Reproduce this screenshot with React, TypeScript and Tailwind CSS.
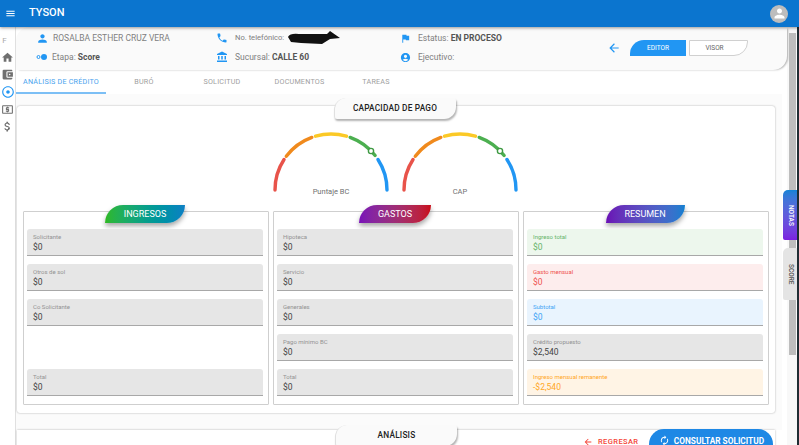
import {
  MdMenu, MdHome, MdAccountBalanceWallet, MdLocalAtm, MdAttachMoney, MdPerson, MdPhone,
  MdAccountBalance, MdFlag, MdAccountCircle, MdArrowBack, MdAutorenew, MdAdjust,
} from 'react-icons/md';

const tabs = [
  { label: 'ANÁLISIS DE CRÉDITO', w: 'w-[90px]', active: true },
  { label: 'BURÓ', w: 'w-[76px]' },
  { label: 'SOLICITUD', w: 'w-[80px]' },
  { label: 'DOCUMENTOS', w: 'w-[75px]' },
  { label: 'TAREAS', w: 'w-[78px]' },
];

const ingresos = [
  { label: 'Solicitante', value: '$0' },
  { label: 'Otros de sol', value: '$0' },
  { label: 'Co Solicitante', value: '$0' },
];

const gastos = ['Hipoteca', 'Servicio', 'Generales', 'Pago mínimo BC', 'Total'];

const resumen = [
  { label: 'Ingreso total', value: '$0', box: 'bg-[#edf7ed]', text: 'text-[#66b56a]' },
  { label: 'Gasto mensual', value: '$0', box: 'bg-[#fdeded]', text: 'text-[#ef5350]' },
  { label: 'Subtotal', value: '$0', box: 'bg-[#e9f4fe]', text: 'text-[#42a5f5]' },
  { label: 'Crédito propuesto', value: '$2,540', box: 'bg-[#e6e6e6]', text: 'text-[#444444]', muted: true },
  { label: 'Ingreso mensual remanente', value: '-$2,540', box: 'bg-[#fff4e5]', text: 'text-[#ffa726]' },
];

const Field = ({ label, value, box = 'bg-[#e6e6e6]', text = 'text-[#444444]', muted = true }: {
  label: string; value: string; box?: string; text?: string; muted?: boolean;
}) => (
  <div className={`h-[27px] rounded-t-[3px] border-b border-[#a8a8a8] pl-[6px] pt-[3px] ${box}`}>
    <div className={`text-[6px] leading-[9px] ${muted ? 'text-[#939393]' : text}`}>{label}</div>
    <div className={`text-[8.5px] leading-[12px] ${text}`}>{value}</div>
  </div>
);

const Badge = ({ title, width, gradient }: { title: string; width: string; gradient: string }) => (
  <div className="flex justify-center h-0">
    <div className={`-mt-[7px] h-[18px] ${width} rounded-tl-[22px] rounded-br-[22px] text-white text-[9px] leading-[18px] text-center shadow-[0_3px_5px_rgba(0,0,0,0.35)] ${gradient}`}>
      {title}
    </div>
  </div>
);

const Pill = ({ title }: { title: string }) => (
  <div className="h-[21px] w-[122px] rounded-tl-[12px] rounded-br-[12px] rounded-tr-[3px] rounded-bl-[3px] bg-[#fafafa] border-l border-[#e0e0e0] shadow-[1px_2px_2px_rgba(0,0,0,0.3)] text-[8.3px] font-medium tracking-[0.2px] leading-[20px] text-center text-[#222222]">
    {title}
  </div>
);

const segments = [
  { from: 180, to: 147, color: '#e8534a' },
  { from: 143, to: 110, color: '#f08a1d' },
  { from: 106, to: 74, color: '#fbc926' },
  { from: 70, to: 38, color: '#4caf50' },
  { from: 33, to: 0, color: '#2196f3' },
];

const Gauge = ({ label }: { label: string }) => {
  const r = 56;
  const pt = (deg: number) => {
    const a = (deg * Math.PI) / 180;
    return `${(60 + r * Math.cos(a)).toFixed(2)} ${(60 - r * Math.sin(a)).toFixed(2)}`;
  };
  return (
    <div className="relative w-[120px] h-[64px]">
      <svg width="120" height="64" viewBox="0 0 120 64">
        {segments.map((s) => (
          <path key={s.color} d={`M${pt(s.from)} A${r} ${r} 0 0 1 ${pt(s.to)}`} fill="none" stroke={s.color} strokeWidth="3.4" strokeLinecap="round" />
        ))}
        <circle cx="100" cy="21" r="2.6" fill="#ffffff" stroke="#3f9a43" strokeWidth="1.4" />
      </svg>
      <div className="absolute bottom-[-3px] left-0 right-0 text-center text-[7.5px] leading-[10px] text-[#707070]">{label}</div>
    </div>
  );
};

const Panel = ({ title, width, gradient, children }: { title: string; width: string; gradient: string; children: React.ReactNode }) => (
  <div className="w-[246px] h-[194px] border border-[#cfcfcf] rounded-[1px] bg-white pl-[3px] pr-[5px]">
    <Badge title={title} width={width} gradient={gradient} />
    {children}
  </div>
);

export default function App() {
  return (
    <div className="w-[799px] h-[445px] overflow-hidden flex flex-col bg-white font-['Roboto',sans-serif]">
      <header className="h-[27px] shrink-0 bg-[#0b75cf] flex items-center pl-[5px] pr-[11px] shadow-[0_1px_3px_rgba(0,0,0,0.4)] z-10">
        <MdMenu className="text-white" size={11} />
        <span className="ml-[13px] text-white text-[11px] font-medium">TYSON</span>
        <div className="ml-auto w-[18px] h-[18px] rounded-full bg-[#bdbdbd] flex items-center justify-center">
          <MdPerson className="text-white" size={15} />
        </div>
      </header>

      <div className="flex-1 flex min-h-0">
        <aside className="w-[16px] shrink-0 border-r border-[#e0e0e0] flex flex-col items-center pt-[7px] gap-[4px] text-[#707070]">
          <span className="h-[13px] text-[8px] leading-[13px] text-[#aaaaaa] -ml-[6px]">F</span>
          <MdHome size={13} />
          <MdAccountBalanceWallet size={13} />
          <MdAdjust size={14} className="text-[#2196f3]" />
          <MdLocalAtm size={13} />
          <MdAttachMoney size={13} />
        </aside>

        <main className="relative flex-1 min-w-0">
          <div className="h-[43px] bg-[#fafafa] rounded-tl-[14px] rounded-br-[14px] shadow-[2px_1px_2px_-1px_rgba(0,0,0,0.3)] flex items-start pt-[4px] text-[8.5px] text-[#808080]">
            <div className="w-[200px] pl-[20px] flex flex-col gap-[5px]">
              <div className="h-[14px] flex items-center gap-[4px]">
                <MdPerson size={13} className="text-[#2196f3]" />
                <span>ROSALBA ESTHER CRUZ VERA</span>
              </div>
              <div className="h-[14px] flex items-center gap-[4px]">
                <svg width="12" height="8" viewBox="0 0 12 8">
                  <circle cx="2.5" cy="4" r="1.5" fill="none" stroke="#2196f3" />
                  <circle cx="8" cy="4" r="3" fill="#2196f3" />
                </svg>
                <span>Etapa: <b className="text-[#555555]">Score</b></span>
              </div>
            </div>
            <div className="w-[184px] flex flex-col gap-[5px]">
              <div className="h-[14px] flex items-center gap-[7px]">
                <MdPhone size={12} className="text-[#2196f3]" />
                <span className="text-[7.6px]">No. telefónico:</span>
                <svg width="54" height="14" viewBox="0 0 54 14" className="-ml-[4px]">
                  <path d="M1 6 Q3 2 12 3 L40 3 L43 0 L53 7 L43 8 L35 13 L14 12 L4 11 Z" fill="#111111" />
                </svg>
              </div>
              <div className="h-[14px] flex items-center gap-[7px]">
                <MdAccountBalance size={12} className="text-[#2196f3]" />
                <span>Sucursal: <b className="text-[#555555]">CALLE 60</b></span>
              </div>
            </div>
            <div className="w-[207px] flex flex-col gap-[5px]">
              <div className="h-[14px] flex items-center gap-[7px]">
                <MdFlag size={11} className="text-[#2196f3]" />
                <span>Estatus: <b className="text-[#555555]">EN PROCESO</b></span>
              </div>
              <div className="h-[14px] flex items-center gap-[7px]">
                <MdAccountCircle size={11} className="text-[#2196f3]" />
                <span>Ejecutivo:</span>
              </div>
            </div>
            <div className="flex items-center mt-[9px]">
              <MdArrowBack size={14} className="text-[#2196f3]" />
              <div className="ml-[9px] w-[56px] h-[16px] bg-[#2196f3] rounded-tl-[14px] text-white text-[6.5px] leading-[16px] text-center">EDITOR</div>
              <div className="ml-[3px] w-[59px] h-[16px] bg-white border border-[#d0d0d0] rounded-br-[14px] text-[#666666] text-[6.5px] leading-[14px] text-center pr-[8px]">VISOR</div>
            </div>
          </div>

          <nav className="h-[24px] flex relative">
            {tabs.map((t) => (
              <div key={t.label} className={`${t.w} h-full pt-[3px] border-b-2 flex items-center justify-center text-[7.2px] tracking-[0.2px] ${t.active ? 'text-[#4aa3ee] border-[#7cbff5]' : 'text-[#a0a0a0] border-transparent'}`}>
                {t.label}
              </div>
            ))}
          </nav>

          <div className="mr-[5px] pt-[12px] pb-[17px] pl-[1px] pr-[7px] bg-[#fbfbfb]">
            <section className="h-[307px] bg-white rounded-[3px] shadow-[0_0_2px_rgba(0,0,0,0.35)]">
              <div className="flex justify-center h-0">
                <div className="-mt-[8px] -ml-[3px]"><Pill title="CAPACIDAD DE PAGO" /></div>
              </div>
              <div className="flex justify-center gap-[9px] pt-[24px] pr-[1px] h-[105px]">
                <Gauge label="Puntaje BC" />
                <Gauge label="CAP" />
              </div>
              <div className="flex pl-[6px] gap-[4px]">
                <Panel title="INGRESOS" width="w-[80px]" gradient="bg-gradient-to-r from-[#2fb81f] to-[#0f7fc4]">
                  <div className="flex flex-col gap-[8px] pt-[17px]">
                    {ingresos.map((f) => <Field key={f.label} {...f} />)}
                    <div className="h-[27px]" />
                    <Field label="Total" value="$0" />
                  </div>
                </Panel>
                <Panel title="GASTOS" width="w-[72px]" gradient="bg-gradient-to-r from-[#7a0fb8] to-[#c80a14]">
                  <div className="flex flex-col gap-[8px] pt-[17px]">
                    {gastos.map((g) => <Field key={g} label={g} value="$0" />)}
                  </div>
                </Panel>
                <Panel title="RESUMEN" width="w-[79px]" gradient="bg-gradient-to-r from-[#6a0db5] to-[#0d7fd0]">
                  <div className="flex flex-col gap-[8px] pt-[17px]">
                    {resumen.map((f) => <Field key={f.label} label={f.label} value={f.value} box={f.box} text={f.text} muted={f.muted ?? false} />)}
                  </div>
                </Panel>
              </div>
            </section>
          </div>

          <div className="ml-[1px] mr-[12px] h-[40px] bg-white shadow-[0_0_2px_rgba(0,0,0,0.3)] flex items-start">
            <div className="-mt-[5px] ml-[318px]"><Pill title="ANÁLISIS" /></div>
            <div className="ml-[126px] mt-[6px] flex items-center gap-[3px] text-[#f44336] text-[7.5px] font-medium tracking-[0.4px]">
              <MdArrowBack size={10} />
              <span className="ml-[2px]">REGRESAR</span>
            </div>
            <div className="ml-[11px] -mt-[1px] w-[124px] h-[30px] rounded-[15px] bg-[#1e88e5] flex items-start justify-center pt-[6px] gap-[4px] text-white text-[8.3px] font-bold">
              <MdAutorenew size={11} />
              <span>CONSULTAR SOLICITUD</span>
            </div>
          </div>

          <div className="absolute right-[-10px] top-[163px] z-10 w-[14px] h-[50px] bg-gradient-to-b from-[#1282d6] to-[#7b1fe0] rounded-tl-[5px] rounded-bl-[2px] text-white text-[6.5px] font-medium flex items-center justify-center [writing-mode:vertical-rl]">
            NOTAS
          </div>
          <div className="absolute right-[-10px] top-[221px] z-10 w-[14px] h-[52px] bg-[#e4e4e4] rounded-tl-[5px] rounded-bl-[2px] text-[#555555] text-[6.5px] font-medium flex items-center justify-center [writing-mode:vertical-rl]">
            SCORE
          </div>
        </main>

        <div className="w-[12px] shrink-0 flex">
          <div className="flex-1 bg-[#f8f8f8] pl-[2px] pt-[6px]">
            <div className="h-[322px] w-[7px] bg-[#bdbdbd]" />
          </div>
          <div className="w-[2px] bg-[#1f2d33]" />
        </div>
      </div>
    </div>
  );
}
